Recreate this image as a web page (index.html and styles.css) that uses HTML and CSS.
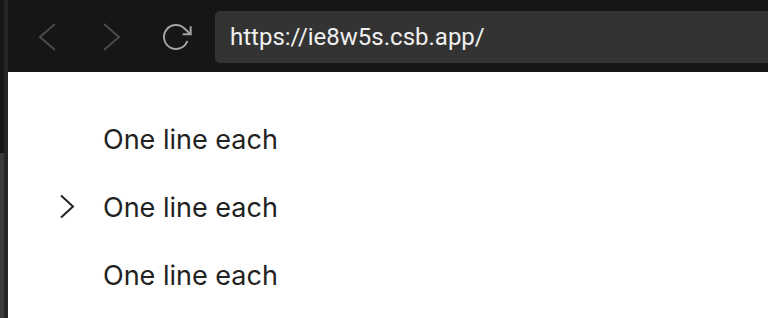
FILE: index.html
```html
<!DOCTYPE html>
<html>
<head>
<meta charset="utf-8">
<link rel="stylesheet" href="styles.css">
</head>
<body>
<div class="window">
  <div class="side">
    <div class="edge"><div class="edge-top"></div><div class="edge-bottom"></div></div>
    <div class="rail"></div>
  </div>
  <div class="main">
    <div class="toolbar">
      <svg class="nav back" width="18" height="28" viewBox="0 0 18 28"><polyline points="16,1 1,14 16,27" fill="none" stroke="#4a4a4a" stroke-width="2"/></svg>
      <svg class="nav fwd" width="18" height="28" viewBox="0 0 18 28"><polyline points="1,1 16,14 1,27" fill="none" stroke="#4a4a4a" stroke-width="2"/></svg>
      <svg class="reload" width="32" height="32" viewBox="0 0 24 24" fill="none" stroke="#a3a3a3" stroke-width="1.5"><polyline points="23 4 23 10 17 10"/><path d="M20.49 15a9 9 0 1 1-2.12-9.36L23 10"/></svg>
      <div class="url">https://ie8w5s.csb.app/</div>
    </div>
    <div class="content">
      <div class="row"><span class="slot"></span><span class="label">One line each</span></div>
      <div class="row"><span class="slot"><svg width="17" height="26" viewBox="0 0 17 26"><polyline points="2,1.5 14,12.5 2,23.5" fill="none" stroke="#222" stroke-width="2"/></svg></span><span class="label">One line each</span></div>
      <div class="row"><span class="slot"></span><span class="label">One line each</span></div>
    </div>
  </div>
</div>
</body>
</html>
```
FILE: styles.css
```css
html, body { margin: 0; padding: 0; background: #fff; }
.window { display: flex; width: 768px; height: 318px; overflow: hidden; }
.side { display: flex; width: 8px; flex: none; }
.edge { width: 4px; display: flex; flex-direction: column; }
.edge-top { height: 153px; background: #161616; }
.edge-bottom { flex: 1; background: #3a3a3a; }
.rail { width: 4px; background: #252525; }
.main { flex: 1; display: flex; flex-direction: column; min-width: 0; }
.toolbar { height: 72px; box-sizing: border-box; padding: 2px 0 0 31px; background: #161616; display: flex; align-items: center; }
.nav { flex: none; display: block; }
.fwd { margin-left: 46px; }
.reload { flex: none; display: block; margin-left: 39px; }
.url { flex: 1; margin-left: 23px; margin-right: -10px; height: 52px; box-sizing: border-box; background: #333; border-radius: 5px; padding-left: 15px; display: flex; align-items: center; font-family: Roboto, "Liberation Sans", sans-serif; font-size: 24px; color: #f0f0f0; }
.content { flex: 1; background: #fff; padding-top: 33px; }
.row { height: 68px; display: flex; align-items: center; padding-left: 51px; }
.slot { width: 17px; height: 26px; flex: none; display: block; }
.slot svg { display: block; }
.label { margin-left: 27px; font-family: Inter, "Noto Sans", sans-serif; font-size: 27px; color: #222; }
```
